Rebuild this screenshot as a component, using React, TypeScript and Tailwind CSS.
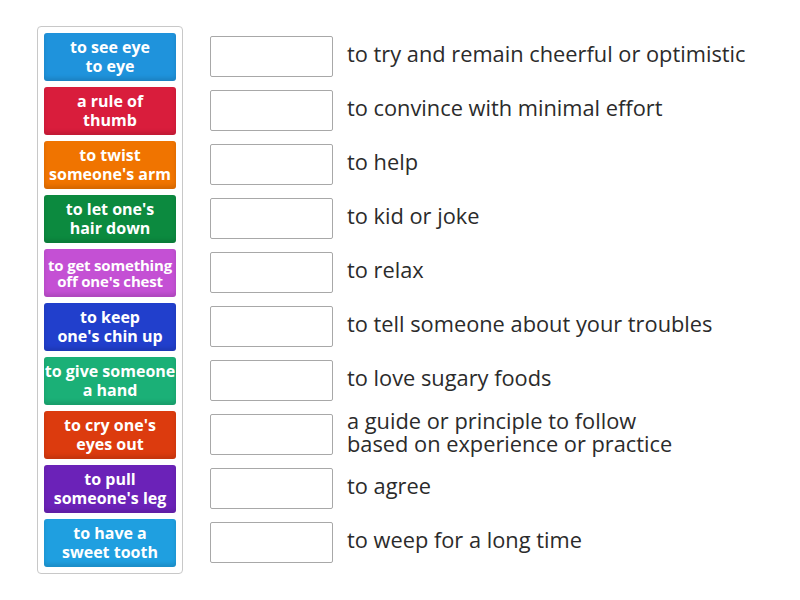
import React from "react";

// ── data ──────────────────────────────────────────────────────────
const tiles = [
  { text: "to see eye to eye", lines: ["to see eye", "to eye"], color: "bg-[#1f93dc]" },
  { text: "a rule of thumb", lines: ["a rule of", "thumb"], color: "bg-[#d91d3c]" },
  { text: "to twist someone's arm", lines: ["to twist", "someone's arm"], color: "bg-[#f07400]" },
  { text: "to let one's hair down", lines: ["to let one's", "hair down"], color: "bg-[#0c8a3f]" },
  { text: "to get something off one's chest", lines: ["to get something", "off one's chest"], color: "bg-[#c450d4]", small: true },
  { text: "to keep one's chin up", lines: ["to keep", "one's chin up"], color: "bg-[#213fcc]" },
  { text: "to give someone a hand", lines: ["to give someone", "a hand"], color: "bg-[#1bb077]" },
  { text: "to cry one's eyes out", lines: ["to cry one's", "eyes out"], color: "bg-[#dc3b0e]" },
  { text: "to pull someone's leg", lines: ["to pull", "someone's leg"], color: "bg-[#6b22b8]" },
  { text: "to have a sweet tooth", lines: ["to have a", "sweet tooth"], color: "bg-[#1f9fe0]" },
];

const definitions = [
  ["to try and remain cheerful or optimistic"],
  ["to convince with minimal effort"],
  ["to help"],
  ["to kid or joke"],
  ["to relax"],
  ["to tell someone about your troubles"],
  ["to love sugary foods"],
  ["a guide or principle to follow", "based on experience or practice"],
  ["to agree"],
  ["to weep for a long time"],
];

// ── Tile ──────────────────────────────────────────────────────────
function Tile({ lines, color, small }: { lines: string[]; color: string; small?: boolean }) {
  return (
    <div
      className={`${color} h-[48px] w-[132px] rounded-[3px] flex flex-col items-center justify-center text-white font-bold text-center shadow-[inset_0_-3px_4px_rgba(0,0,0,0.12)] ${
        small ? "text-[15px] leading-[16px] tracking-[-0.2px]" : "text-[16px] leading-[19px]"
      }`}
    >
      {lines.map((l) => (
        <div key={l} className="whitespace-nowrap">{l}</div>
      ))}
    </div>
  );
}

// ── App ───────────────────────────────────────────────────────────
export default function App() {
  return (
    <div className="w-[800px] h-[600px] bg-white flex font-['Open_Sans',sans-serif]">
      <div className="ml-[37px] mt-[26px] self-start border border-[#c8c8c8] rounded-[4px] p-[6px] flex flex-col gap-[6px]">
        {tiles.map((t) => (
          <Tile key={t.text} lines={t.lines} color={t.color} small={t.small} />
        ))}
      </div>

      <div className="ml-[27px] mt-[36px] flex flex-col gap-[13px]">
        {definitions.map((d) => (
          <div key={d[0]} className="h-[41px] flex items-center">
            <div className="w-[123px] h-[41px] border border-[#a8a8a8] rounded-[2px] bg-white shrink-0" />
            <div className="ml-[14px] -mt-[6px] text-[21.8px] leading-[23px] text-[#2b2b2b] whitespace-nowrap">
              {d.map((l) => (
                <div key={l}>{l}</div>
              ))}
            </div>
          </div>
        ))}
      </div>
    </div>
  );
}
